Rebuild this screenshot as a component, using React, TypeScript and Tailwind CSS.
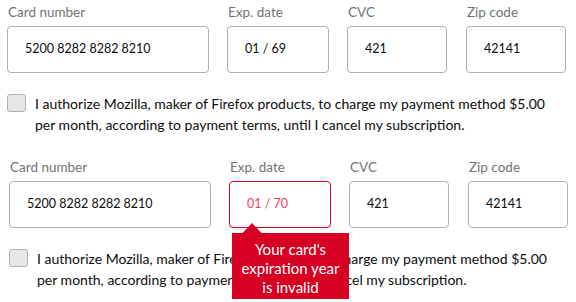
import React from 'react';

const FONT = "font-['Lato','Open_Sans',sans-serif]";

function Field({ label, value, width, error }: { label: string; value: string; width: string; error?: boolean }) {
    return (
        <div className={`flex flex-col ${width}`}>
            <label className="text-[13.5px] leading-[18px] text-[#737373] pl-[1px] mt-[3px] mb-[5px]">{label}</label>
            <div
                className={`h-[47px] rounded-[4px] border flex items-center pl-[17px] text-[12.5px] ${
                    error ? 'border-[#d70022] text-[#f0405a]' : 'border-[#b1b1b1] text-[#0c0c0d]'
                }`}
            >
                {value}
            </div>
        </div>
    );
}

function PaymentBlock({ exp, error }: { exp: string; error?: boolean }) {
    return (
        <div className="relative">
            <div className="flex">
                <Field label="Card number" value="5200 8282 8282 8210" width="w-[202px]" />
                <div className="relative ml-[18px]">
                    <Field label="Exp. date" value={exp} width="w-[102px]" error={error} />
                    {error && (
                        <div className="absolute left-[3px] top-[78px] z-10 w-[117px]">
                            <svg className="absolute left-[10px] -top-[10px]" width="20" height="11" viewBox="0 0 20 11">
                                <polygon points="10,0 20,10.5 0,10.5" fill="#d70022" />
                            </svg>
                            <div className="bg-[#d70022] text-white text-[15px] leading-[19px] text-center pt-[7px] pb-[4px] h-[66px]">
                                Your card's
                                <br />
                                expiration year
                                <br />
                                is invalid
                            </div>
                        </div>
                    )}
                </div>
                <div className="ml-[18px]">
                    <Field label="CVC" value="421" width="w-[100px]" />
                </div>
                <div className="ml-[19px]">
                    <Field label="Zip code" value="42141" width="w-[100px]" />
                </div>
            </div>
            <div className="flex mt-[21px]">
                <div className="w-[19px] h-[18px] shrink-0 rounded-[3px] border border-[#b1b1b1] bg-[#e6e6e6]" />
                <p className="ml-[9px] text-[14px] leading-[21px] text-[#0c0c0d] -mt-[1px]">
                    I authorize Mozilla, maker of Firefox products, to charge my payment method $5.00 per month, according to payment terms, until I cancel my subscription.
                </p>
            </div>
        </div>
    );
}

export default function App() {
    return (
        <div className={`w-[576px] h-[302px] bg-white overflow-hidden pl-[7px] pr-[8px] ${FONT}`}>
            <PaymentBlock exp="01 / 69" />
            <div className="mt-[20px] ml-[2px]">
                <PaymentBlock exp="01 / 70" error />
            </div>
        </div>
    );
}
